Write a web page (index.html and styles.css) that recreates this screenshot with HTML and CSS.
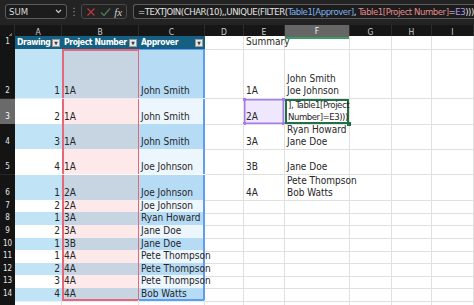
FILE: index.html
```html
<!DOCTYPE html>
<html lang="en">
<head>
  <meta charset="UTF-8">
  <title>Summary - Excel</title>
  <link rel="stylesheet" href="styles.css">
</head>
<body>

  <div class="topbar">
    <div class="namebox">
      <span>SUM</span>
      <svg class="chev" width="7" height="5" viewBox="0 0 7 5"><path d="M1 1l2.5 2.5L6 1" fill="none" stroke="#cfcfcf" stroke-width="1.1"/></svg>
    </div>
    <div class="dots">&#8942;</div>
    <div class="fxbox">
      <svg width="10" height="10" viewBox="0 0 10 10"><path d="M1.5 1.5l7 7M8.5 1.5l-7 7" stroke="#b5383c" stroke-width="1.3"/></svg>
      <svg width="11" height="10" viewBox="0 0 11 10"><path d="M1 5.5l3 3L10 1.5" fill="none" stroke="#4d7a55" stroke-width="1.3"/></svg>
      <span class="fx">fx</span>
    </div>
    <div class="formula">=TEXTJOIN(CHAR(10),,UNIQUE(FILTER(<span class="ref-c">Table1[Approver]</span>, <span class="ref-b">Table1[Project Number]</span>=<span class="ref-e">E3</span>)))</div>
  </div>

  <div class="sheet">
    <div class="row colheads">
      <div class="corner"></div>
      <div>A</div><div>B</div><div>C</div><div>D</div><div>E</div>
      <div class="sel">F</div><div>G</div><div>H</div><div>I</div>
    </div>

    <div class="row h1">
      <div class="rh">1</div>
      <div class="th"><span>Drawing</span><span class="drop">&#9660;</span></div>
      <div class="th"><span>Project Number</span><span class="drop">&#9660;</span></div>
      <div class="th"><span>Approver</span><span class="drop">&#9660;</span></div>
      <div class="c"></div>
      <div class="c">Summary</div>
      <div class="c"></div><div class="c"></div><div class="c"></div><div class="c"></div>
    </div>

    <div class="row h4">
      <div class="rh">2</div>
      <div class="ta band num">1</div>
      <div class="tb band top">1A</div>
      <div class="tc band top">John Smith</div>
      <div class="c"></div>
      <div class="c">1A</div>
      <div class="c">John Smith<br>Joe Johnson</div>
      <div class="c"></div><div class="c"></div><div class="c"></div>
    </div>

    <div class="row h2">
      <div class="rh sel">3</div>
      <div class="ta num">2</div>
      <div class="tb">1A</div>
      <div class="tc">John Smith</div>
      <div class="c"></div>
      <div class="c refe">2A<i class="hd tl"></i><i class="hd tr"></i><i class="hd bl"></i><i class="hd br"></i></div>
      <div class="c edit">], Table1[Project<br>Number]=E3)))<i class="hd gr"></i></div>
      <div class="c"></div><div class="c"></div><div class="c"></div>
    </div>

    <div class="row h2">
      <div class="rh">4</div>
      <div class="ta band num">3</div>
      <div class="tb band">1A</div>
      <div class="tc band">John Smith</div>
      <div class="c"></div>
      <div class="c">3A</div>
      <div class="c">Ryan Howard<br>Jane Doe</div>
      <div class="c"></div><div class="c"></div><div class="c"></div>
    </div>

    <div class="row h2">
      <div class="rh">5</div>
      <div class="ta num">4</div>
      <div class="tb">1A</div>
      <div class="tc">Joe Johnson</div>
      <div class="c"></div>
      <div class="c">3B</div>
      <div class="c">Jane Doe</div>
      <div class="c"></div><div class="c"></div><div class="c"></div>
    </div>

    <div class="row h2">
      <div class="rh">6</div>
      <div class="ta band num">1</div>
      <div class="tb band">2A</div>
      <div class="tc band">Joe Johnson</div>
      <div class="c"></div>
      <div class="c">4A</div>
      <div class="c">Pete Thompson<br>Bob Watts</div>
      <div class="c"></div><div class="c"></div><div class="c"></div>
    </div>

    <div class="row h1">
      <div class="rh">7</div>
      <div class="ta num">2</div>
      <div class="tb">2A</div>
      <div class="tc">Joe Johnson</div>
      <div class="c"></div><div class="c"></div><div class="c"></div><div class="c"></div><div class="c"></div><div class="c"></div>
    </div>

    <div class="row h1">
      <div class="rh">8</div>
      <div class="ta band num">1</div>
      <div class="tb band">3A</div>
      <div class="tc band">Ryan Howard</div>
      <div class="c"></div><div class="c"></div><div class="c"></div><div class="c"></div><div class="c"></div><div class="c"></div>
    </div>

    <div class="row h1">
      <div class="rh">9</div>
      <div class="ta num">2</div>
      <div class="tb">3A</div>
      <div class="tc">Jane Doe</div>
      <div class="c"></div><div class="c"></div><div class="c"></div><div class="c"></div><div class="c"></div><div class="c"></div>
    </div>

    <div class="row h1">
      <div class="rh">10</div>
      <div class="ta band num">1</div>
      <div class="tb band">3B</div>
      <div class="tc band">Jane Doe</div>
      <div class="c"></div><div class="c"></div><div class="c"></div><div class="c"></div><div class="c"></div><div class="c"></div>
    </div>

    <div class="row h1">
      <div class="rh">11</div>
      <div class="ta num">1</div>
      <div class="tb">4A</div>
      <div class="tc">Pete Thompson</div>
      <div class="c"></div><div class="c"></div><div class="c"></div><div class="c"></div><div class="c"></div><div class="c"></div>
    </div>

    <div class="row h1">
      <div class="rh">12</div>
      <div class="ta band num">2</div>
      <div class="tb band">4A</div>
      <div class="tc band">Pete Thompson</div>
      <div class="c"></div><div class="c"></div><div class="c"></div><div class="c"></div><div class="c"></div><div class="c"></div>
    </div>

    <div class="row h1">
      <div class="rh">13</div>
      <div class="ta num">3</div>
      <div class="tb">4A</div>
      <div class="tc">Pete Thompson</div>
      <div class="c"></div><div class="c"></div><div class="c"></div><div class="c"></div><div class="c"></div><div class="c"></div>
    </div>

    <div class="row h1">
      <div class="rh">14</div>
      <div class="ta band num">4</div>
      <div class="tb band bottom">4A</div>
      <div class="tc band bottom">Bob Watts</div>
      <div class="c"></div><div class="c"></div><div class="c"></div><div class="c"></div><div class="c"></div><div class="c"></div>
    </div>

    <div class="row h1">
      <div class="rh"></div>
      <div class="c"></div><div class="c"></div><div class="c"></div><div class="c"></div><div class="c"></div>
      <div class="c"></div><div class="c"></div><div class="c"></div><div class="c"></div>
    </div>
  </div>

</body>
</html>
```

FILE: styles.css
```css
body {
  margin: 0;
  width: 474px;
  height: 305px;
  overflow: hidden;
  background-color: #ffffff;
  font-family: "Liberation Sans Narrow", "DejaVu Sans Condensed", "Liberation Sans", sans-serif;
  font-size: 10px;
  color: #262626;
}

/* formula bar */
.topbar {
  height: 25px;
  box-sizing: border-box;
  padding: 4px 0 6px 5px;
  display: flex;
  align-items: stretch;
  background-color: #232323;
  color: #d8d8d8;
}

.namebox {
  width: 62px;
  box-sizing: border-box;
  border: 1px solid #5c5c5c;
  border-radius: 3px;
  background-color: #1c1c1c;
  display: flex;
  align-items: center;
  justify-content: space-between;
  padding: 0 4px 0 3px;
  font-size: 9.5px;
}

.dots {
  width: 14px;
  text-align: center;
  font-size: 10px;
  line-height: 15px;
  color: #9a9a9a;
}

.fxbox {
  width: 46px;
  box-sizing: border-box;
  border: 1px solid #4a4a4a;
  border-radius: 3px;
  display: flex;
  align-items: center;
  justify-content: space-around;
  padding: 0 2px;
}

.fx {
  font-family: "Liberation Serif", serif;
  font-style: italic;
  font-size: 11px;
  color: #cfcfcf;
}

.formula {
  flex: 1;
  margin-left: 6px;
  border: 1px solid #5c5c5c;
  border-right: none;
  border-radius: 3px 0 0 3px;
  background-color: #1c1c1c;
  padding: 0 0 0 4px;
  line-height: 13px;
  font-size: 9.5px;
  letter-spacing: -0.45px;
  white-space: nowrap;
  overflow: hidden;
  color: #e4e4e4;
}

.ref-c { color: #7eb2ee; }
.ref-b { color: #e48a8f; }
.ref-e { color: #b99af0; }

/* grid */
.row {
  display: grid;
  grid-template-columns: 15px 47px 77px 66px 39px 41px 65px 42px 40px 42px;
}

.row > div {
  box-sizing: border-box;
  position: relative;
  display: flex;
  align-items: flex-end;
  padding: 0 2px 1px;
  line-height: 12px;
  white-space: nowrap;
  overflow: visible;
}

.colheads {
  height: 11px;
  background-color: #161616;
}

.colheads > div {
  justify-content: center;
  align-items: center;
  padding: 0;
  font-size: 8.5px;
  color: #cdcdcd;
  border-right: 1px solid #2c2c2c;
}

.colheads .sel {
  background-color: #666666;
  color: #f0f0f0;
  border-bottom: 2px solid #3b9c63;
}

.corner {
  background: linear-gradient(135deg, transparent 60%, #6a6a6a 60%) no-repeat right 2px bottom 1px / 6px 7px;
}

.h1 { height: 12.6px; }
.h2 { height: 25.2px; }
.h4 { height: 50.4px; }

.rh {
  background-color: #141414;
  color: #e6e6e6;
  font-size: 8px;
  justify-content: center;
  border-bottom: 1px solid #262626;
  padding: 0 0 1px !important;
}

.rh.sel {
  background-color: #6a6a6a;
  color: #ffffff;
}

.c {
  border-right: 1px solid #e0e0e0;
  border-bottom: 1px solid #e0e0e0;
}

/* table */
.th {
  background-color: #156082;
  color: #ffffff;
  font-weight: bold;
  font-size: 8.6px;
  letter-spacing: -0.4px;
  justify-content: space-between;
  overflow: hidden !important;
  border-bottom: 1px solid #ffffff;
}

.drop {
  flex: none;
  width: 8px;
  height: 8px;
  box-sizing: border-box;
  background-color: #e9e9e9;
  border: 1px solid #9a9a9a;
  color: #3a3a3a;
  font-size: 5px;
  line-height: 6px;
  letter-spacing: 0;
  text-align: center;
  font-weight: normal;
  margin-bottom: 1px;
}

.ta, .tb, .tc {
  border-bottom: 1px solid rgba(255, 255, 255, 0.55);
}

.ta { background-color: #ffffff; }
.ta.band { background-color: #c0e4f5; }
.num { justify-content: flex-end; }

.tb {
  background-color: #fde9ea;
  box-shadow: inset 2px 0 #e4687a, inset -1px 0 #e4687a;
}
.tb.band { background-color: #c7d4e2; }
.tb.top { box-shadow: inset 2px 0 #e4687a, inset -1px 0 #e4687a, inset 0 2px #e4687a; }
.tb.bottom { box-shadow: inset 2px 0 #e4687a, inset -1px 0 #e4687a, inset 0 -2px #e4687a; }

.tc {
  background-color: #eef6fd;
  box-shadow: inset -2px 0 #5f9cf0;
}
.tc.band { background-color: #b5dbf5; }
.tc.top { box-shadow: inset -2px 0 #5f9cf0, inset 0 1px #5f9cf0; }
.tc.bottom { box-shadow: inset -2px 0 #5f9cf0, inset 0 -2px #5f9cf0; }

/* reference + edit cells */
.refe {
  background-color: #efe7fc;
  box-shadow: inset 0 0 0 1.5px #a57ce9;
}

.edit {
  background-color: #ffffff;
  box-shadow: inset 0 0 0 2px #1f7145;
  padding-left: 3px !important;
  font-size: 9.5px;
  letter-spacing: -0.45px;
  z-index: 1;
}

.hd {
  position: absolute;
  width: 3px;
  height: 3px;
  background-color: #a57ce9;
}
.hd.tl { left: -1px; top: -1px; }
.hd.tr { right: -1px; top: -1px; }
.hd.bl { left: -1px; bottom: -1px; }
.hd.br { right: -1px; bottom: -1px; }
.hd.gr { right: -2px; bottom: -2px; width: 4px; height: 4px; background-color: #1f7145; }
```
